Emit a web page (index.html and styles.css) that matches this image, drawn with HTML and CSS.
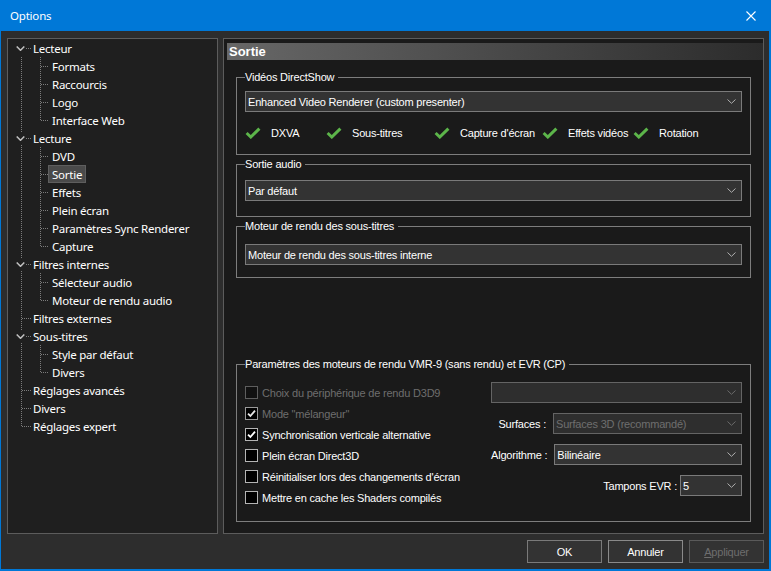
FILE: index.html
```html
<!DOCTYPE html>
<html>
<head>
    <meta charset="UTF-8" />
    <title>Options</title>
    <link rel="stylesheet" href="styles.css">
</head>

<body>
<div class="window">
    <div class="titlebar">
        <div class="title">Options</div>
        <button class="close-button" id="btn-close">
            <svg width="10" height="10" viewBox="0 0 10 10"><path d="M0.5 0.5 L9.5 9.5 M9.5 0.5 L0.5 9.5" stroke="#fff" stroke-width="1.1" fill="none"/></svg>
        </button>
    </div>

    <div class="main">
        <div class="panes">
            <div class="tree-pane">
                <ul class="tree">
                    <li>
                        <div class="row"><span class="toggle"><svg width="9" height="5" viewBox="0 0 9 5"><polyline points="0.7,0.5 4.5,4.3 8.3,0.5" fill="none" stroke="#c0c0c0" stroke-width="1.5"/></svg></span><span class="label">Lecteur</span></div>
                        <ul class="children">
                            <li><div class="row"><span class="label">Formats</span></div></li>
                            <li><div class="row"><span class="label">Raccourcis</span></div></li>
                            <li><div class="row"><span class="label">Logo</span></div></li>
                            <li><div class="row"><span class="label">Interface Web</span></div></li>
                        </ul>
                    </li>
                    <li>
                        <div class="row"><span class="toggle"><svg width="9" height="5" viewBox="0 0 9 5"><polyline points="0.7,0.5 4.5,4.3 8.3,0.5" fill="none" stroke="#c0c0c0" stroke-width="1.5"/></svg></span><span class="label">Lecture</span></div>
                        <ul class="children">
                            <li><div class="row"><span class="label">DVD</span></div></li>
                            <li><div class="row"><span class="label selected">Sortie</span></div></li>
                            <li><div class="row"><span class="label">Effets</span></div></li>
                            <li><div class="row"><span class="label">Plein écran</span></div></li>
                            <li><div class="row"><span class="label">Paramètres Sync Renderer</span></div></li>
                            <li><div class="row"><span class="label">Capture</span></div></li>
                        </ul>
                    </li>
                    <li>
                        <div class="row"><span class="toggle"><svg width="9" height="5" viewBox="0 0 9 5"><polyline points="0.7,0.5 4.5,4.3 8.3,0.5" fill="none" stroke="#c0c0c0" stroke-width="1.5"/></svg></span><span class="label">Filtres internes</span></div>
                        <ul class="children">
                            <li><div class="row"><span class="label">Sélecteur audio</span></div></li>
                            <li><div class="row"><span class="label">Moteur de rendu audio</span></div></li>
                        </ul>
                    </li>
                    <li><div class="row"><span class="spacer"></span><span class="label">Filtres externes</span></div></li>
                    <li>
                        <div class="row"><span class="toggle"><svg width="9" height="5" viewBox="0 0 9 5"><polyline points="0.7,0.5 4.5,4.3 8.3,0.5" fill="none" stroke="#c0c0c0" stroke-width="1.5"/></svg></span><span class="label">Sous-titres</span></div>
                        <ul class="children">
                            <li><div class="row"><span class="label">Style par défaut</span></div></li>
                            <li><div class="row"><span class="label">Divers</span></div></li>
                        </ul>
                    </li>
                    <li><div class="row"><span class="spacer"></span><span class="label">Réglages avancés</span></div></li>
                    <li><div class="row"><span class="spacer"></span><span class="label">Divers</span></div></li>
                    <li><div class="row"><span class="spacer"></span><span class="label">Réglages expert</span></div></li>
                </ul>
            </div>

            <div class="page">
                <div class="page-title">Sortie</div>

                <fieldset class="group group-video">
                    <legend>Vidéos DirectShow</legend>
                    <div class="combo">
                        <span>Enhanced Video Renderer (custom presenter)</span>
                        <svg class="arrow" width="9" height="5" viewBox="0 0 9 5"><polyline points="0.5,0.5 4.5,4.3 8.5,0.5" fill="none" stroke="#b0b0b0" stroke-width="1"/></svg>
                    </div>
                    <div class="caps">
                        <div class="cap"><svg width="16" height="12" viewBox="0 0 16 12"><path d="M1.6 6 L5.8 10 L14.4 1.6" fill="none" stroke="#5cb54a" stroke-width="3"/></svg><span>DXVA</span></div>
                        <div class="cap"><svg width="16" height="12" viewBox="0 0 16 12"><path d="M1.6 6 L5.8 10 L14.4 1.6" fill="none" stroke="#5cb54a" stroke-width="3"/></svg><span>Sous-titres</span></div>
                        <div class="cap"><svg width="16" height="12" viewBox="0 0 16 12"><path d="M1.6 6 L5.8 10 L14.4 1.6" fill="none" stroke="#5cb54a" stroke-width="3"/></svg><span>Capture d'écran</span></div>
                        <div class="cap"><svg width="16" height="12" viewBox="0 0 16 12"><path d="M1.6 6 L5.8 10 L14.4 1.6" fill="none" stroke="#5cb54a" stroke-width="3"/></svg><span>Effets vidéos</span></div>
                        <div class="cap"><svg width="16" height="12" viewBox="0 0 16 12"><path d="M1.6 6 L5.8 10 L14.4 1.6" fill="none" stroke="#5cb54a" stroke-width="3"/></svg><span>Rotation</span></div>
                    </div>
                </fieldset>

                <fieldset class="group group-audio">
                    <legend>Sortie audio</legend>
                    <div class="combo">
                        <span>Par défaut</span>
                        <svg class="arrow" width="9" height="5" viewBox="0 0 9 5"><polyline points="0.5,0.5 4.5,4.3 8.5,0.5" fill="none" stroke="#b0b0b0" stroke-width="1"/></svg>
                    </div>
                </fieldset>

                <fieldset class="group group-subs">
                    <legend>Moteur de rendu des sous-titres</legend>
                    <div class="combo">
                        <span>Moteur de rendu des sous-titres interne</span>
                        <svg class="arrow" width="9" height="5" viewBox="0 0 9 5"><polyline points="0.5,0.5 4.5,4.3 8.5,0.5" fill="none" stroke="#b0b0b0" stroke-width="1"/></svg>
                    </div>
                </fieldset>

                <fieldset class="group group-renderer">
                    <legend>Paramètres des moteurs de rendu VMR-9 (sans rendu) et EVR (CP)</legend>
                    <div class="renderer">
                        <div class="checks">
                            <label class="checkbox-label disabled"><span class="box"></span>Choix du périphérique de rendu D3D9</label>
                            <label class="checkbox-label disabled"><span class="box checked"><svg width="11" height="11" viewBox="0 0 11 11"><path d="M2 5.6 L4.4 8 L9 2.6" fill="none" stroke="#e8e8e8" stroke-width="1.8"/></svg></span>Mode "mélangeur"</label>
                            <label class="checkbox-label"><span class="box checked"><svg width="11" height="11" viewBox="0 0 11 11"><path d="M2 5.6 L4.4 8 L9 2.6" fill="none" stroke="#fff" stroke-width="1.8"/></svg></span>Synchronisation verticale alternative</label>
                            <label class="checkbox-label"><span class="box"></span>Plein écran Direct3D</label>
                            <label class="checkbox-label"><span class="box"></span>Réinitialiser lors des changements d'écran</label>
                            <label class="checkbox-label"><span class="box"></span>Mettre en cache les Shaders compilés</label>
                        </div>
                        <div class="render-opts">
                            <div class="field">
                                <div class="combo disabled device">
                                    <span></span>
                                    <svg class="arrow" width="9" height="5" viewBox="0 0 9 5"><polyline points="0.5,0.5 4.5,4.3 8.5,0.5" fill="none" stroke="#6a6a6a" stroke-width="1"/></svg>
                                </div>
                            </div>
                            <div class="field">
                                <span class="field-label">Surfaces :</span>
                                <div class="combo disabled medium">
                                    <span>Surfaces 3D (recommandé)</span>
                                    <svg class="arrow" width="9" height="5" viewBox="0 0 9 5"><polyline points="0.5,0.5 4.5,4.3 8.5,0.5" fill="none" stroke="#6a6a6a" stroke-width="1"/></svg>
                                </div>
                            </div>
                            <div class="field">
                                <span class="field-label">Algorithme :</span>
                                <div class="combo medium">
                                    <span>Bilinéaire</span>
                                    <svg class="arrow" width="9" height="5" viewBox="0 0 9 5"><polyline points="0.5,0.5 4.5,4.3 8.5,0.5" fill="none" stroke="#b0b0b0" stroke-width="1"/></svg>
                                </div>
                            </div>
                            <div class="field tight">
                                <span class="field-label">Tampons EVR :</span>
                                <div class="combo small">
                                    <span>5</span>
                                    <svg class="arrow" width="9" height="5" viewBox="0 0 9 5"><polyline points="0.5,0.5 4.5,4.3 8.5,0.5" fill="none" stroke="#b0b0b0" stroke-width="1"/></svg>
                                </div>
                            </div>
                        </div>
                    </div>
                </fieldset>
            </div>
        </div>

        <div class="action-buttons">
            <button id="btn-ok">OK</button>
            <button id="btn-cancel" class="cancel">Annuler</button>
            <button id="btn-apply" disabled><u>A</u>ppliquer</button>
        </div>
    </div>
</div>
</body>
</html>
```

FILE: styles.css
```css
* {
    margin: 0;
    padding: 0;
    box-sizing: border-box;
}

:root {
    --title-bg: #0078d7;
    --window-bg: #2d2d2d;
    --tree-bg: #1f1f1f;
    --page-bg: #1a1a1a;
    --pane-border: #5c5c5c;
    --group-border: #7d7d7d;
    --combo-bg: #333333;
    --combo-border: #7a7a7a;
    --text-color: #ffffff;
    --disabled-text: #6e6e6e;
    --tree-line: #7c7c7c;
}

body {
    width: 771px;
    height: 571px;
    overflow: hidden;
    background-color: var(--title-bg);
    font-family: "Liberation Sans", Arial, sans-serif;
    font-size: 11px;
    letter-spacing: -0.2px;
    color: var(--text-color);
}

.window {
    width: 771px;
    height: 571px;
    display: flex;
    flex-direction: column;
    background-color: var(--window-bg);
    border-left: 1px solid var(--title-bg);
    border-right: 2px solid var(--title-bg);
    border-bottom: 2px solid var(--title-bg);
}

.titlebar {
    height: 31px;
    flex: none;
    display: flex;
    justify-content: space-between;
    align-items: center;
    background-color: var(--title-bg);
    padding-left: 9px;
}

.title {
    font-family: "Noto Sans", "Open Sans", sans-serif;
    font-size: 11.5px;
    letter-spacing: -0.2px;
    color: #fff;
    padding-bottom: 1px;
}

.close-button {
    width: 30px;
    height: 31px;
    border: none;
    background: none;
    display: flex;
    align-items: center;
    justify-content: center;
    margin-right: 3px;
}

.main {
    flex: 1;
    display: flex;
    flex-direction: column;
    padding: 7px 5px 6px 6px;
}

.panes {
    height: 496px;
    display: flex;
    gap: 5px;
}

/* Tree */
.tree-pane {
    width: 211px;
    flex: none;
    background-color: var(--tree-bg);
    border: 1px solid var(--pane-border);
    font-family: "Noto Sans", "Open Sans", sans-serif;
    font-size: 11.5px;
    letter-spacing: -0.25px;
}

.tree, .children {
    list-style: none;
}

.tree {
    background: repeating-linear-gradient(to bottom, var(--tree-line) 0 1px, transparent 1px 2px) 13px 18px / 1px calc(100% - 27px) no-repeat;
}

.children {
    background: repeating-linear-gradient(to bottom, var(--tree-line) 0 1px, transparent 1px 2px) 32px 0 / 1px calc(100% - 9px) no-repeat;
}

.row {
    height: 18px;
    display: flex;
    align-items: center;
}

.tree > li > .row {
    padding-left: 7px;
    background: repeating-linear-gradient(to right, var(--tree-line) 0 1px, transparent 1px 2px) 14px 9px / 9px 1px no-repeat;
}

.children .row {
    padding-left: 40px;
    background: repeating-linear-gradient(to right, var(--tree-line) 0 1px, transparent 1px 2px) 33px 9px / 8px 1px no-repeat;
}

.toggle, .spacer {
    width: 11px;
    height: 11px;
    flex: none;
    display: flex;
    align-items: center;
    justify-content: center;
    margin-right: 3px;
}

.toggle {
    background-color: var(--tree-bg);
}

.toggle svg {
    margin-top: 1px;
}

.label {
    height: 18px;
    line-height: 16px;
    padding: 1px 3px 0;
    border: 1px solid transparent;
    white-space: nowrap;
}

.label.selected {
    background-color: #4a4a4a;
    border-color: #5e5e5e;
}

/* Page */
.page {
    flex: 1;
    display: flex;
    flex-direction: column;
    background-color: var(--page-bg);
    border: 1px solid var(--pane-border);
    padding: 4px 0 0 3px;
}

.page-title {
    height: 17px;
    line-height: 17px;
    padding-left: 2px;
    font-size: 13px;
    font-weight: bold;
    letter-spacing: 0;
    background: linear-gradient(to right, #676767, #2c2c2c);
}

.group {
    border: 1px solid var(--group-border);
    margin: 0 12px 0 9px;
    padding: 0 8px;
    min-width: 0;
}

.group legend {
    font-size: 11px;
    line-height: 13px;
    padding: 0 4px 0 0;
    color: var(--text-color);
}

.group-video {
    margin-top: 11px;
    padding-top: 7px;
    padding-bottom: 13px;
}

.group-audio {
    margin-top: 3px;
    padding-top: 9px;
    padding-bottom: 15px;
}

.group-subs {
    margin-top: 3px;
    padding-top: 11px;
    padding-bottom: 12px;
}

.group-renderer {
    margin-top: auto;
    margin-bottom: 11px;
    padding-top: 11px;
    padding-bottom: 13px;
}

.combo {
    height: 21px;
    display: flex;
    align-items: center;
    justify-content: space-between;
    background-color: var(--combo-bg);
    border: 1px solid var(--combo-border);
    padding: 0 5px 0 2px;
    white-space: nowrap;
}

.combo .arrow {
    flex: none;
}

.combo.disabled {
    background-color: #2e2e2e;
    border-color: #646464;
    color: var(--disabled-text);
}

.combo.device {
    width: 251px;
}

.combo.medium {
    width: 189px;
}

.combo.small {
    width: 62px;
}

.caps {
    display: grid;
    grid-template-columns: 81px 108px 108px 91px auto;
    height: 16px;
    margin-top: 13px;
}

.cap {
    display: flex;
    align-items: center;
    gap: 10px;
    white-space: nowrap;
}

.renderer {
    display: grid;
    grid-template-columns: 1fr 251px;
}

.checks {
    display: flex;
    flex-direction: column;
}

.checkbox-label {
    height: 21px;
    display: flex;
    align-items: center;
    gap: 4px;
    white-space: nowrap;
}

.checkbox-label.disabled {
    color: var(--disabled-text);
}

.box {
    width: 13px;
    height: 13px;
    flex: none;
    background-color: #000;
    border: 1px solid #b4b4b4;
    display: flex;
    align-items: center;
    justify-content: center;
}

.checkbox-label.disabled .box {
    border-color: #5e5e5e;
    background-color: #111;
}

.checkbox-label.disabled .box.checked {
    border-color: #9a9a9a;
    background-color: #000;
}

.render-opts {
    display: flex;
    flex-direction: column;
    gap: 10px;
}

.field {
    height: 21px;
    display: flex;
    justify-content: flex-end;
    align-items: center;
    gap: 7px;
}

.field.tight {
    gap: 3px;
}

.field-label {
    white-space: nowrap;
}

/* Buttons */
.action-buttons {
    display: flex;
    justify-content: flex-end;
    gap: 6px;
    margin-top: 6px;
}

button {
    font-family: "Liberation Sans", Arial, sans-serif;
    font-size: 11px;
    letter-spacing: -0.2px;
    color: var(--text-color);
}

.action-buttons button {
    width: 75px;
    height: 23px;
    background-color: #333;
    border: 1px solid #7a7a7a;
}

.action-buttons button.cancel {
    border-color: #8a8a8a;
}

.action-buttons button:disabled {
    color: var(--disabled-text);
    border-color: #5a5a5a;
}
```
